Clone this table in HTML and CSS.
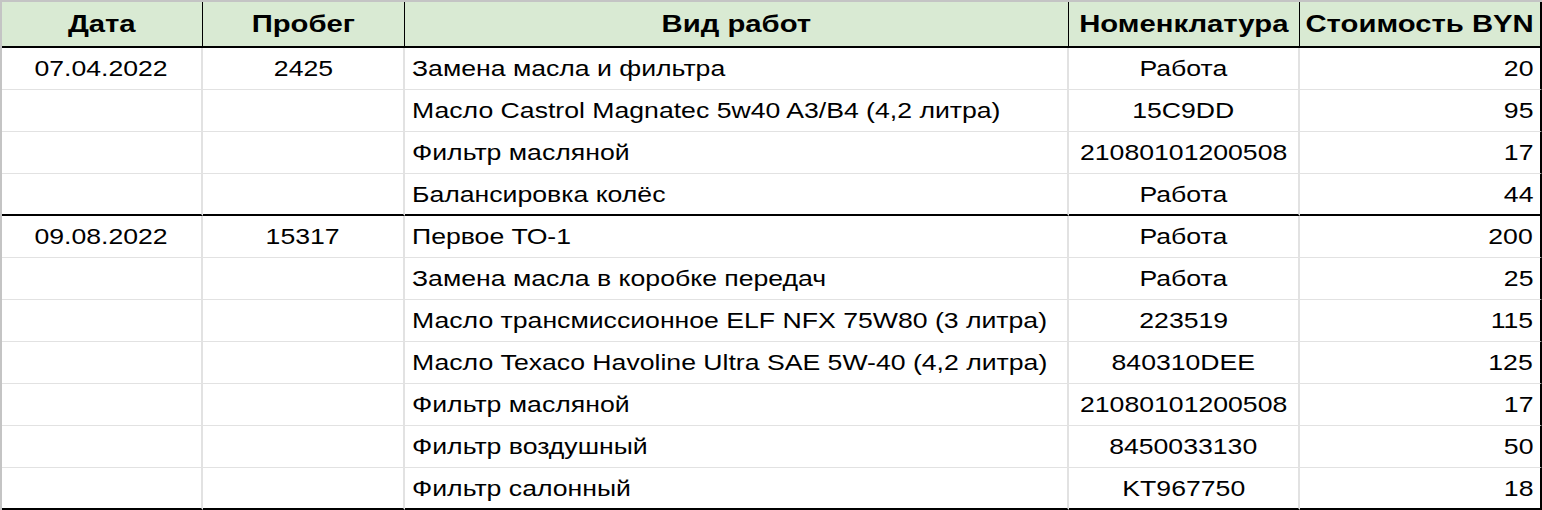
FILE: index.html
```html
<!DOCTYPE html>
<html lang="ru">
<head>
<meta charset="utf-8">
<title>Обслуживание</title>
<link rel="stylesheet" href="styles.css">
</head>
<body>
<div class="sheet">
  <div class="cell head"><span class="t">Дата</span></div>
  <div class="cell head"><span class="t">Пробег</span></div>
  <div class="cell head"><span class="t">Вид работ</span></div>
  <div class="cell head"><span class="t">Номенклатура</span></div>
  <div class="cell head last"><span class="t">Стоимость BYN</span></div>

  <div class="cell c"><span class="t">07.04.2022</span></div><div class="cell c"><span class="t">2425</span></div><div class="cell l"><span class="t">Замена масла и фильтра</span></div><div class="cell c"><span class="t">Работа</span></div><div class="cell r last"><span class="t">20</span></div>
  <div class="cell c"></div><div class="cell c"></div><div class="cell l"><span class="t">Масло Castrol Magnatec 5w40 A3/B4 (4,2 литра)</span></div><div class="cell c"><span class="t">15C9DD</span></div><div class="cell r last"><span class="t">95</span></div>
  <div class="cell c"></div><div class="cell c"></div><div class="cell l"><span class="t">Фильтр масляной</span></div><div class="cell c"><span class="t">21080101200508</span></div><div class="cell r last"><span class="t">17</span></div>
  <div class="cell c end"></div><div class="cell c end"></div><div class="cell l end"><span class="t">Балансировка колёс</span></div><div class="cell c end"><span class="t">Работа</span></div><div class="cell r last end"><span class="t">44</span></div>

  <div class="cell c"><span class="t">09.08.2022</span></div><div class="cell c"><span class="t">15317</span></div><div class="cell l"><span class="t">Первое ТО-1</span></div><div class="cell c"><span class="t">Работа</span></div><div class="cell r last"><span class="t">200</span></div>
  <div class="cell c"></div><div class="cell c"></div><div class="cell l"><span class="t">Замена масла в коробке передач</span></div><div class="cell c"><span class="t">Работа</span></div><div class="cell r last"><span class="t">25</span></div>
  <div class="cell c"></div><div class="cell c"></div><div class="cell l"><span class="t">Масло трансмиссионное ELF NFX 75W80 (3 литра)</span></div><div class="cell c"><span class="t">223519</span></div><div class="cell r last"><span class="t">115</span></div>
  <div class="cell c"></div><div class="cell c"></div><div class="cell l"><span class="t">Масло Texaco Havoline Ultra SAE 5W-40 (4,2 литра)</span></div><div class="cell c"><span class="t">840310DEE</span></div><div class="cell r last"><span class="t">125</span></div>
  <div class="cell c"></div><div class="cell c"></div><div class="cell l"><span class="t">Фильтр масляной</span></div><div class="cell c"><span class="t">21080101200508</span></div><div class="cell r last"><span class="t">17</span></div>
  <div class="cell c"></div><div class="cell c"></div><div class="cell l"><span class="t">Фильтр воздушный</span></div><div class="cell c"><span class="t">8450033130</span></div><div class="cell r last"><span class="t">50</span></div>
  <div class="cell c end"></div><div class="cell c end"></div><div class="cell l end"><span class="t">Фильтр салонный</span></div><div class="cell c end"><span class="t">KT967750</span></div><div class="cell r last end"><span class="t">18</span></div>
</div>
</body>
</html>
```
FILE: styles.css
```css
html, body {
  margin: 0;
  padding: 0;
  background: #ffffff;
}
.sheet {
  display: grid;
  grid-template-columns: 201px 202px 664px 231px 242px;
  grid-template-rows: 46px repeat(11, 42px);
  width: 1542px;
  box-sizing: border-box;
  border-left: 2px solid #c4c4c4;
  border-top: 2px solid #c4c4c4;
  font-family: "Liberation Sans", Arial, sans-serif;
  font-size: 22px;
  color: #000;
}
.cell {
  box-sizing: border-box;
  border-right: 2px solid #e2e2e2;
  border-bottom: 1px solid #e2e2e2;
  display: flex;
  align-items: center;
  white-space: nowrap;
  padding-top: 1px;
}
.t {
  display: inline-block;
  transform: scaleX(1.21);
  transform-origin: center;
}
.head {
  background: #d9ead3;
  font-weight: bold;
  font-size: 24px;
  justify-content: center;
  border-right: 1px solid #000;
  border-bottom: 2px solid #000;
  padding-top: 0;
}
.head .t { transform: scaleX(1.22); }
.c { justify-content: center; }
.l { justify-content: flex-start; padding-left: 7px; }
.l .t { transform-origin: left center; }
.r { justify-content: flex-end; padding-right: 7px; }
.r .t { transform-origin: right center; }
.last { border-right: 2px solid #000; }
.end { border-bottom: 2px solid #000; }
```
